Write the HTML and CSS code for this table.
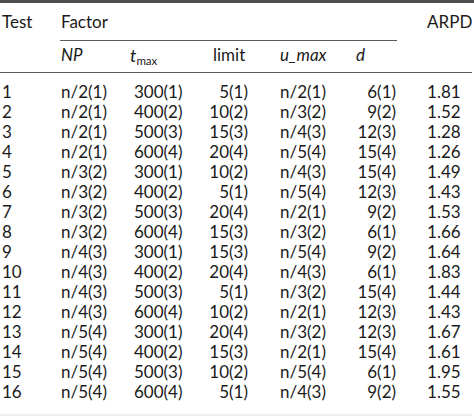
FILE: index.html
```html
<!DOCTYPE html>
<html lang="en">
<head>
<meta charset="utf-8">
<title>Factor table</title>
<link rel="stylesheet" href="styles.css">
</head>
<body>
<div class="topbar"></div>
<table class="tbl">
  <colgroup>
    <col class="w1"><col class="w2"><col class="w3"><col class="w4"><col class="w5"><col class="w6"><col class="w7">
  </colgroup>
  <thead>
    <tr class="h1">
      <th class="c1">Test</th>
      <th class="factor" colspan="5">Factor</th>
      <th class="c7h">ARPD</th>
    </tr>
    <tr class="h2">
      <th class="c1"></th>
      <th class="c2"><i>NP</i></th>
      <th class="c3h"><i class="tt">t</i><sub>max</sub></th>
      <th class="c4h">limit</th>
      <th class="c5"><i>u_max</i></th>
      <th class="c6h"><i>d</i></th>
      <th class="c7h"></th>
    </tr>
  </thead>
  <tbody>
    <tr class="first"><td class="c1">1</td><td class="c2">n/2(1)</td><td class="c3">300(1)</td><td class="c4">5(1)</td><td class="c5">n/2(1)</td><td class="c6">6(1)</td><td class="c7">1.81</td></tr>
    <tr><td class="c1">2</td><td class="c2">n/2(1)</td><td class="c3">400(2)</td><td class="c4">10(2)</td><td class="c5">n/3(2)</td><td class="c6">9(2)</td><td class="c7">1.52</td></tr>
    <tr><td class="c1">3</td><td class="c2">n/2(1)</td><td class="c3">500(3)</td><td class="c4">15(3)</td><td class="c5">n/4(3)</td><td class="c6">12(3)</td><td class="c7">1.28</td></tr>
    <tr><td class="c1">4</td><td class="c2">n/2(1)</td><td class="c3">600(4)</td><td class="c4">20(4)</td><td class="c5">n/5(4)</td><td class="c6">15(4)</td><td class="c7">1.26</td></tr>
    <tr><td class="c1">5</td><td class="c2">n/3(2)</td><td class="c3">300(1)</td><td class="c4">10(2)</td><td class="c5">n/4(3)</td><td class="c6">15(4)</td><td class="c7">1.49</td></tr>
    <tr><td class="c1">6</td><td class="c2">n/3(2)</td><td class="c3">400(2)</td><td class="c4">5(1)</td><td class="c5">n/5(4)</td><td class="c6">12(3)</td><td class="c7">1.43</td></tr>
    <tr><td class="c1">7</td><td class="c2">n/3(2)</td><td class="c3">500(3)</td><td class="c4">20(4)</td><td class="c5">n/2(1)</td><td class="c6">9(2)</td><td class="c7">1.53</td></tr>
    <tr><td class="c1">8</td><td class="c2">n/3(2)</td><td class="c3">600(4)</td><td class="c4">15(3)</td><td class="c5">n/3(2)</td><td class="c6">6(1)</td><td class="c7">1.66</td></tr>
    <tr><td class="c1">9</td><td class="c2">n/4(3)</td><td class="c3">300(1)</td><td class="c4">15(3)</td><td class="c5">n/5(4)</td><td class="c6">9(2)</td><td class="c7">1.64</td></tr>
    <tr><td class="c1">10</td><td class="c2">n/4(3)</td><td class="c3">400(2)</td><td class="c4">20(4)</td><td class="c5">n/4(3)</td><td class="c6">6(1)</td><td class="c7">1.83</td></tr>
    <tr><td class="c1">11</td><td class="c2">n/4(3)</td><td class="c3">500(3)</td><td class="c4">5(1)</td><td class="c5">n/3(2)</td><td class="c6">15(4)</td><td class="c7">1.44</td></tr>
    <tr><td class="c1">12</td><td class="c2">n/4(3)</td><td class="c3">600(4)</td><td class="c4">10(2)</td><td class="c5">n/2(1)</td><td class="c6">12(3)</td><td class="c7">1.43</td></tr>
    <tr><td class="c1">13</td><td class="c2">n/5(4)</td><td class="c3">300(1)</td><td class="c4">20(4)</td><td class="c5">n/3(2)</td><td class="c6">12(3)</td><td class="c7">1.67</td></tr>
    <tr><td class="c1">14</td><td class="c2">n/5(4)</td><td class="c3">400(2)</td><td class="c4">15(3)</td><td class="c5">n/2(1)</td><td class="c6">15(4)</td><td class="c7">1.61</td></tr>
    <tr><td class="c1">15</td><td class="c2">n/5(4)</td><td class="c3">500(3)</td><td class="c4">10(2)</td><td class="c5">n/5(4)</td><td class="c6">6(1)</td><td class="c7">1.95</td></tr>
    <tr><td class="c1">16</td><td class="c2">n/5(4)</td><td class="c3">600(4)</td><td class="c4">5(1)</td><td class="c5">n/4(3)</td><td class="c6">9(2)</td><td class="c7">1.55</td></tr>
  </tbody>
</table>
<div class="bottomband"></div>
</body>
</html>
```

FILE: styles.css
```css
html, body {
  margin: 0;
  padding: 0;
  background: #ffffff;
}
body {
  width: 474px;
  height: 416px;
  overflow: hidden;
  font-family: "Lato", "Liberation Sans", sans-serif;
  font-size: 17px;
  color: #1a1a1a;
}
.topbar {
  height: 3px;
  background: #4f4f4f;
}
.tbl {
  width: 472px;
  table-layout: fixed;
  border-collapse: collapse;
  border-spacing: 0;
}
.w1 { width: 60px; }
.w2 { width: 70px; }
.w3 { width: 75px; }
.w4 { width: 60px; }
.w5 { width: 80px; }
.w6 { width: 52px; }
.w7 { width: 75px; }
th, td {
  padding: 0;
  font-weight: normal;
  text-align: left;
  white-space: nowrap;
  line-height: 20px;
}
.h1 th {
  height: 37px;
  vertical-align: middle;
}
.h1 .factor {
  border-bottom: 1px solid #5a5a5a;
  padding-left: 1px;
}
.h2 th {
  height: 28px;
  vertical-align: middle;
  border-bottom: 1px solid #5a5a5a;
  padding-bottom: 3px;
}
.h2 .tt {
  font-size: 18px;
}
.h2 sub {
  font-size: 11.5px;
  vertical-align: -3px;
  line-height: 0;
}
tbody td {
  height: 20px;
  vertical-align: middle;
}
tbody tr.first td {
  padding-top: 9px;
}
.c1 { padding-left: 2px; }
.c2 { padding-left: 1px; }
.c3h { padding-left: 0; }
.c3 { padding-left: 4px; }
.c4h { padding-left: 8px; }
.c4 { text-align: right; padding-right: 17px; }
.c5 { padding-left: 15px; }
.c6h { padding-left: 11px; }
.c6 { text-align: right; padding-right: 1px; }
.c7h { padding-left: 30px; }
.c7 { padding-left: 30px; }
.bottomband {
  margin-top: 12px;
  width: 472px;
  height: 10px;
  background: #eeeeee;
}
```
